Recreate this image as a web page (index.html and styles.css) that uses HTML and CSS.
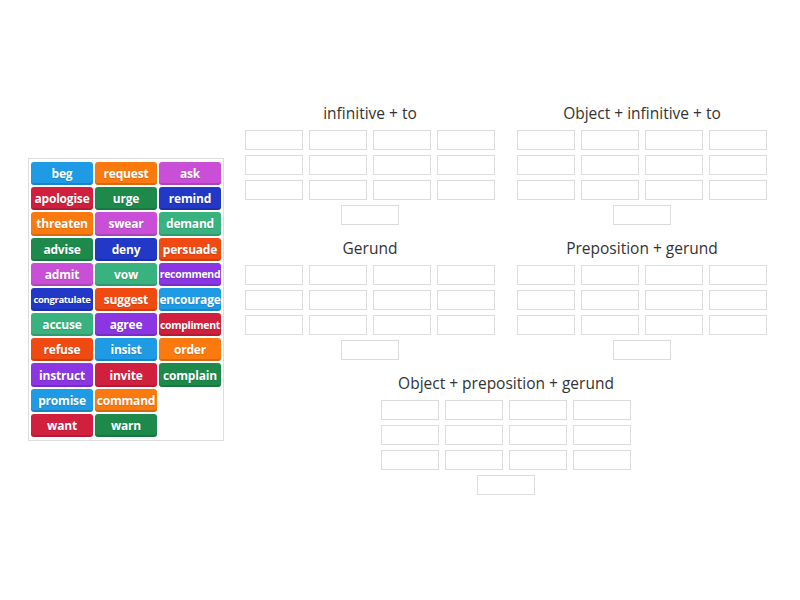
FILE: index.html
```html
<!DOCTYPE html>
<html>
<head>
<meta charset="utf-8">
<link rel="stylesheet" href="styles.css">
</head>
<body>
<div class="page">
  <div class="bank">
    <div class="tile c-blue">beg</div>
    <div class="tile c-orange">request</div>
    <div class="tile c-magenta">ask</div>
    <div class="tile c-red">apologise</div>
    <div class="tile c-green">urge</div>
    <div class="tile c-navy">remind</div>
    <div class="tile c-orange">threaten</div>
    <div class="tile c-magenta">swear</div>
    <div class="tile c-sea">demand</div>
    <div class="tile c-green">advise</div>
    <div class="tile c-navy">deny</div>
    <div class="tile c-redorange">persuade</div>
    <div class="tile c-magenta">admit</div>
    <div class="tile c-sea">vow</div>
    <div class="tile c-purple small">recommend</div>
    <div class="tile c-navy tiny">congratulate</div>
    <div class="tile c-redorange">suggest</div>
    <div class="tile c-blue">encourage</div>
    <div class="tile c-sea">accuse</div>
    <div class="tile c-purple">agree</div>
    <div class="tile c-red small">compliment</div>
    <div class="tile c-redorange">refuse</div>
    <div class="tile c-blue">insist</div>
    <div class="tile c-orange">order</div>
    <div class="tile c-purple">instruct</div>
    <div class="tile c-red">invite</div>
    <div class="tile c-green">complain</div>
    <div class="tile c-blue">promise</div>
    <div class="tile c-orange">command</div>
    <div class="tile empty"></div>
    <div class="tile c-red">want</div>
    <div class="tile c-green">warn</div>
    <div class="tile empty"></div>
  </div>

  <div class="zones">
    <div class="group">
      <div class="title">infinitive + to</div>
      <div class="slots">
        <div class="slot"></div><div class="slot"></div><div class="slot"></div><div class="slot"></div>
        <div class="slot"></div><div class="slot"></div><div class="slot"></div><div class="slot"></div>
        <div class="slot"></div><div class="slot"></div><div class="slot"></div><div class="slot"></div>
        <div class="slot"></div>
      </div>
    </div>
    <div class="group">
      <div class="title">Object + infinitive + to</div>
      <div class="slots">
        <div class="slot"></div><div class="slot"></div><div class="slot"></div><div class="slot"></div>
        <div class="slot"></div><div class="slot"></div><div class="slot"></div><div class="slot"></div>
        <div class="slot"></div><div class="slot"></div><div class="slot"></div><div class="slot"></div>
        <div class="slot"></div>
      </div>
    </div>
    <div class="group">
      <div class="title">Gerund</div>
      <div class="slots">
        <div class="slot"></div><div class="slot"></div><div class="slot"></div><div class="slot"></div>
        <div class="slot"></div><div class="slot"></div><div class="slot"></div><div class="slot"></div>
        <div class="slot"></div><div class="slot"></div><div class="slot"></div><div class="slot"></div>
        <div class="slot"></div>
      </div>
    </div>
    <div class="group">
      <div class="title">Preposition + gerund</div>
      <div class="slots">
        <div class="slot"></div><div class="slot"></div><div class="slot"></div><div class="slot"></div>
        <div class="slot"></div><div class="slot"></div><div class="slot"></div><div class="slot"></div>
        <div class="slot"></div><div class="slot"></div><div class="slot"></div><div class="slot"></div>
        <div class="slot"></div>
      </div>
    </div>
    <div class="group wide">
      <div class="title">Object + preposition + gerund</div>
      <div class="slots">
        <div class="slot"></div><div class="slot"></div><div class="slot"></div><div class="slot"></div>
        <div class="slot"></div><div class="slot"></div><div class="slot"></div><div class="slot"></div>
        <div class="slot"></div><div class="slot"></div><div class="slot"></div><div class="slot"></div>
        <div class="slot"></div>
      </div>
    </div>
  </div>
</div>
</body>
</html>
```

FILE: styles.css
```css
html, body {
  margin: 0;
  padding: 0;
  background: #ffffff;
}

.page {
  width: 800px;
  height: 600px;
  box-sizing: border-box;
  padding-left: 28px;
  display: flex;
  align-items: center;
  gap: 21px;
  font-family: "Open Sans", "Liberation Sans", sans-serif;
}

.bank {
  box-sizing: border-box;
  width: 196px;
  padding: 3px 2px 3px 2px;
  border: 1px solid #dedede;
  display: grid;
  grid-template-columns: repeat(3, 62px);
  grid-auto-rows: 23.2px;
  gap: 2px;
  margin-top: -1px;
}

.tile {
  border-radius: 3px;
  color: #ffffff;
  font-weight: 700;
  font-size: 12px;
  display: flex;
  align-items: center;
  justify-content: center;
  white-space: nowrap;
  overflow: hidden;
  letter-spacing: -0.2px;
  box-shadow: inset 0 -2px 0 rgba(0, 0, 0, 0.14);
  text-shadow: 0 1px 1px rgba(0, 0, 0, 0.12);
}

.tile.small { font-size: 10.5px; letter-spacing: -0.3px; }
.tile.tiny { font-size: 9.5px; letter-spacing: -0.35px; }
.tile.empty { box-shadow: none; }

.c-blue { background: #1f9ae4; }
.c-orange { background: #fa7a10; }
.c-magenta { background: #c94fd6; }
.c-red { background: #d1203d; }
.c-green { background: #1d8a4b; }
.c-navy { background: #2139c6; }
.c-sea { background: #38b37f; }
.c-redorange { background: #ef4a12; }
.c-purple { background: #8b35e3; }

.zones {
  display: grid;
  grid-template-columns: 250px 250px;
  column-gap: 22px;
  row-gap: 13px;
  padding-bottom: 2px;
}

.group {
  width: 250px;
  display: flex;
  flex-direction: column;
  align-items: center;
}

.group.wide {
  grid-column: 1 / span 2;
  justify-self: center;
}

.title {
  font-size: 15.5px;
  line-height: 20px;
  color: #333333;
  margin-bottom: 7px;
  white-space: nowrap;
}

.slots {
  width: 250px;
  display: flex;
  flex-wrap: wrap;
  justify-content: center;
  column-gap: 6px;
  row-gap: 5px;
}

.slot {
  box-sizing: border-box;
  width: 58px;
  height: 20px;
  border: 1px solid #dcdcdc;
  background: #ffffff;
}
```
